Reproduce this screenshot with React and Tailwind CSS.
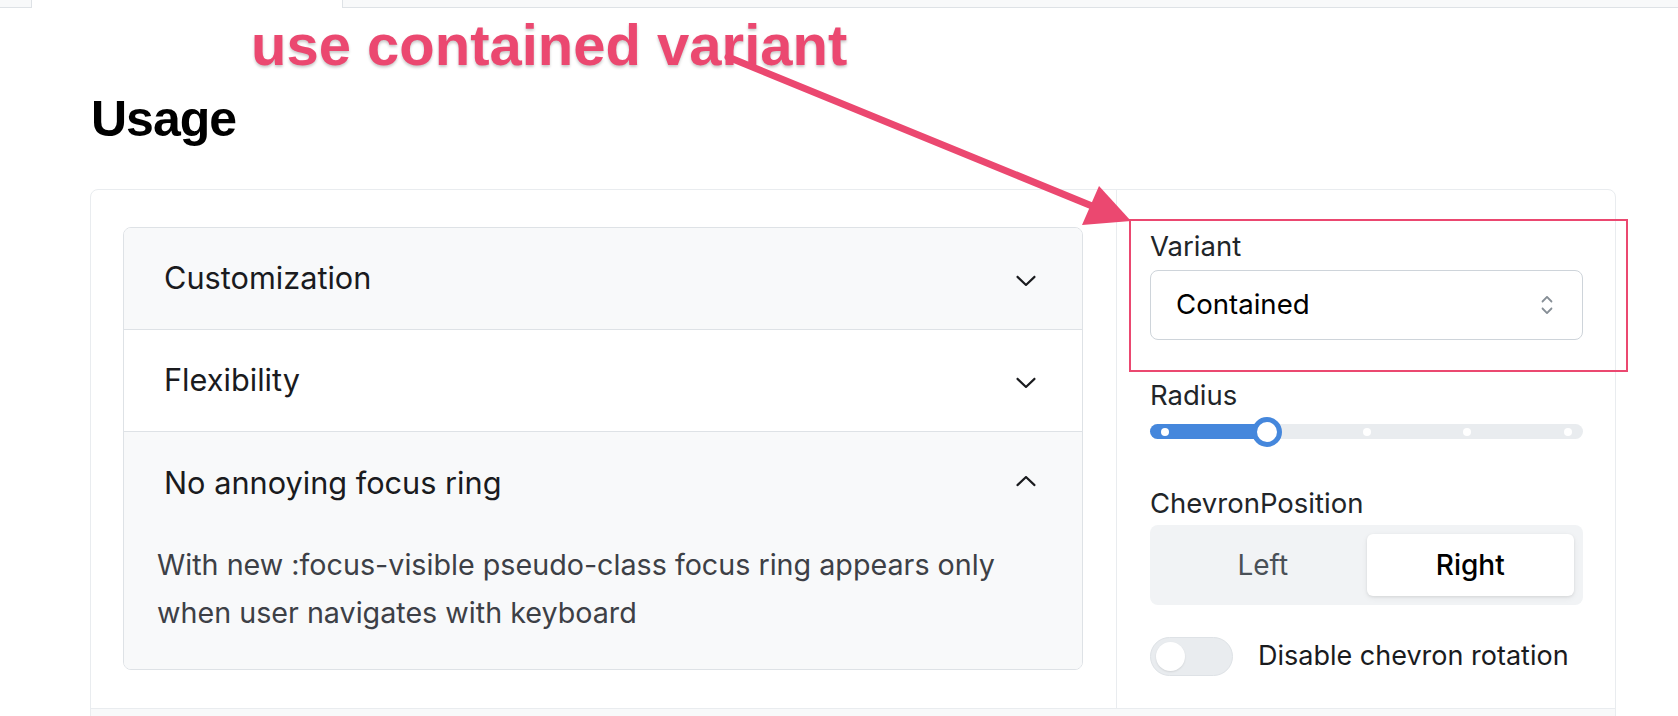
import React from 'react';

const pink = '#eb4870';

// chevron du composant accordéon (Radix)
const Chevron = ({ up }) => (
    <svg viewBox="0 0 15 15" className={up ? 'h-[32px] w-[32px] rotate-180' : 'h-[32px] w-[32px]'} fill="#1a1b1e">
        <path d="M3.13523 6.15803C3.3241 5.95657 3.64052 5.94637 3.84197 6.13523L7.5 9.56464L11.158 6.13523C11.3595 5.94637 11.6759 5.95657 11.8648 6.15803C12.0536 6.35949 12.0434 6.67591 11.842 6.86477L7.84197 10.6148C7.64964 10.7951 7.35036 10.7951 7.15803 10.6148L3.15803 6.86477C2.95657 6.67591 2.94637 6.35949 3.13523 6.15803Z" />
    </svg>
);

const Selector = () => (
    <svg viewBox="0 0 15 15" className="h-[30px] w-[30px]" fill="#868e96">
        <path d="M4.93179 5.43179C4.75605 5.60753 4.75605 5.89245 4.93179 6.06819C5.10753 6.24392 5.39245 6.24392 5.56819 6.06819L7.49999 4.13638L9.43179 6.06819C9.60753 6.24392 9.89245 6.24392 10.0682 6.06819C10.2439 5.89245 10.2439 5.60753 10.0682 5.43179L7.81819 3.18179C7.73379 3.0974 7.61933 3.04999 7.49999 3.04999C7.38064 3.04999 7.26618 3.0974 7.18179 3.18179L4.93179 5.43179ZM10.0682 9.56819C10.2439 9.39245 10.2439 9.10753 10.0682 8.93179C9.89245 8.75606 9.60753 8.75606 9.43179 8.93179L7.49999 10.8636L5.56819 8.93179C5.39245 8.75606 5.10753 8.75606 4.93179 8.93179C4.75605 9.10753 4.75605 9.39245 4.93179 9.56819L7.18179 11.8182C7.35753 11.9939 7.64245 11.9939 7.81819 11.8182L10.0682 9.56819Z" />
    </svg>
);

const AccordionRow = ({ label, bg, up, last }) => (
    <div className={`flex h-[102px] items-center justify-between pl-[40px] pr-[40px] ${bg} ${last ? '' : 'border-b border-[#dee2e6]'}`}>
        <span className="text-[30.7px] text-[#1a1b1e]">{label}</span>
        <Chevron up={up} />
    </div>
);

const Label = ({ children }) => (
    <div className="h-[36px] text-[27.5px] leading-[36px] text-[#212529]">{children}</div>
);

export default function App() {
    const marks = [0, 25, 50, 75, 100];
    return (
        <div className="relative h-[716px] w-full overflow-hidden bg-white font-['Inter',sans-serif]">
            {/* onglets en haut */}
            <div className="flex h-[8px]">
                <div className="w-[32px] border-b border-r border-[#dee2e6] bg-[#f8f9fa]" />
                <div className="w-[310px] bg-white" />
                <div className="flex-1 border-b border-l border-[#dee2e6] bg-[#f8f9fa]" />
            </div>

            <h2 className="pl-[91px] pt-[86px] pb-[45px] font-['Liberation_Sans',sans-serif] text-[50px] font-bold leading-[50px] tracking-[-1px] text-black">
                Usage
            </h2>

            {/* carte de démo */}
            <div className="ml-[90px] w-[1526px] rounded-t-[8px] border border-[#e9ecef]">
                <div className="flex">
                    <div className="flex-1 pl-[32px] pr-[33px] pt-[37px] pb-[35px]">
                        <div className="overflow-hidden rounded-[8px] border border-[#dee2e6]">
                            <AccordionRow label="Customization" bg="bg-[#f8f9fa]" />
                            <AccordionRow label="Flexibility" bg="bg-white" />
                            <div className="bg-[#f8f9fa]">
                                <AccordionRow label="No annoying focus ring" bg="bg-[#f8f9fa]" up last />
                                <p className="pl-[33px] pr-[40px] pt-[7px] pb-[32px] text-[28.7px] leading-[48px] text-[#3d4046]">
                                    With new :focus-visible pseudo-class focus ring appears only when user navigates with keyboard
                                </p>
                            </div>
                        </div>
                    </div>

                    <div className="w-[499px] border-l border-[#e9ecef] pl-[33px] pr-[32px] pt-[38px] pb-[31px]">
                        <Label>Variant</Label>
                        <div className="mt-[6px] flex h-[70px] items-center justify-between rounded-[8px] border border-[#ced4da] pl-[25px] pr-[20px]">
                            <span className="text-[27.6px] text-[#000]">Contained</span>
                            <Selector />
                        </div>

                        <div className="mt-[37px]">
                            <Label>Radius</Label>
                        </div>
                        <div className="relative mt-[4px] h-[30px]">
                            <div className="absolute left-0 right-0 top-[7px] h-[15px] rounded-full bg-[#e9ecef]" />
                            <div className="absolute left-0 top-[7px] h-[15px] w-[117px] rounded-l-full bg-[#4587dc]" />
                            {marks.map((m) => (
                                <div
                                    key={m}
                                    className="absolute top-[11px] h-[8px] w-[8px] -translate-x-1/2 rounded-full bg-white"
                                    style={{ left: 15 + (403 * m) / 100 }}
                                />
                            ))}
                            <div className="absolute left-[102px] top-0 h-[30px] w-[30px] rounded-full border-[5px] border-[#4587dc] bg-white" />
                        </div>

                        <div className="mt-[38px]">
                            <Label>ChevronPosition</Label>
                        </div>
                        <div className="mt-[4px] flex h-[80px] rounded-[8px] bg-[#f1f3f5] p-[9px]">
                            <div className="flex flex-1 items-center justify-center text-[28px] text-[#495057]">Left</div>
                            <div className="flex flex-1 items-center justify-center rounded-[6px] bg-white text-[28px] font-medium text-black shadow-[0_1px_3px_rgba(0,0,0,0.08),0_2px_6px_rgba(0,0,0,0.06)]">
                                Right
                            </div>
                        </div>

                        <div className="mt-[31px] flex items-center">
                            <div className="flex h-[39px] w-[83px] items-center rounded-full border border-[#dee2e6] bg-[#e9ecef] pl-[5px]">
                                <div className="h-[29px] w-[29px] rounded-full bg-white shadow-[0_1px_2px_rgba(0,0,0,0.1)]" />
                            </div>
                            <span className="ml-[25px] text-[27px] text-[#1a1b1e]">Disable chevron rotation</span>
                        </div>
                    </div>
                </div>
                <div className="h-[200px] border-t border-[#e9ecef] bg-[#f8f9fa]" />
            </div>

            {/* annotation par-dessus */}
            <div
                className="absolute left-[251px] top-[16px] font-['Liberation_Sans',sans-serif] text-[58px] font-bold leading-[58px] [text-shadow:0_2px_3px_rgba(0,0,0,0.22)]"
                style={{ color: pink }}
            >
                use contained variant
            </div>
            <svg className="pointer-events-none absolute left-0 top-0" width="1678" height="716">
                <line x1="728" y1="57" x2="1092" y2="206" stroke={pink} strokeWidth="7" strokeLinecap="round" />
                <polygon points="1131,221 1082,225 1099,186" fill={pink} />
            </svg>
            <div className="pointer-events-none absolute left-[1129px] top-[219px] h-[153px] w-[499px] border-2 border-[#eb4870]" />
        </div>
    );
}
